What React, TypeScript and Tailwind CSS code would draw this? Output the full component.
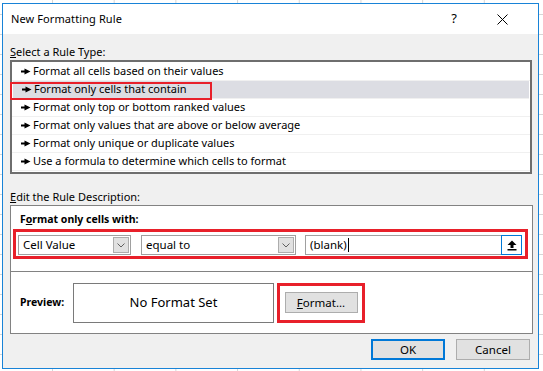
import React from 'react';

const RULE_TYPES = [
  'Format all cells based on their values',
  'Format only cells that contain',
  'Format only top or bottom ranked values',
  'Format only values that are above or below average',
  'Format only unique or duplicate values',
  'Use a formula to determine which cells to format',
];

const RuleArrow = () => (
  <svg width="10" height="7" viewBox="0 0 10 7" className="shrink-0">
    <rect x="0" y="2.5" width="5" height="2" fill="#000" />
    <path d="M3.5 0.5 L9.5 3.5 L3.5 6.5 Z" fill="#000" />
  </svg>
);

const Chevron = () => (
  <svg width="8" height="5" viewBox="0 0 8 5">
    <path d="M0.5 0.5 L4 4 L7.5 0.5" fill="none" stroke="#606060" strokeWidth="1" />
  </svg>
);

const Combo = ({ label, width }: { label: string; width: string }) => (
  <div className={`${width} h-[20px] bg-white border border-[#a0a0a0] flex items-center justify-between`}>
    <span className="pl-[4px] text-[11.5px] leading-none">{label}</span>
    <div className="w-[16px] h-[16px] mr-[1px] bg-[#e1e1e1] border border-[#adadad] flex items-center justify-center">
      <Chevron />
    </div>
  </div>
);

export default function App() {
  return (
    <div className="w-[543px] h-[371px] bg-white bg-[linear-gradient(to_right,#d6d6d6_1px,transparent_1px),linear-gradient(to_bottom,#d6d6d6_1px,transparent_1px)] bg-[size:61.7px_20px] bg-[position:52px_14px] pt-[3px] pl-[2px] pr-[4px] pb-[2px] font-['Noto_Sans',sans-serif] text-black">
      <div className="h-full border border-[#1883d7] bg-[#f0f0f0] flex flex-col">
        {/* title bar */}
        <div className="h-[30px] bg-white flex items-center pl-[8px] shrink-0">
          <span className="text-[11px] tracking-[0.1px]">New Formatting Rule</span>
          <span className="ml-auto text-[13px] mr-[40px]">?</span>
          <svg width="11" height="11" viewBox="0 0 11 11" className="mr-[30px]">
            <path d="M0.5 0.5 L10.5 10.5 M10.5 0.5 L0.5 10.5" stroke="#000" strokeWidth="1" />
          </svg>
        </div>

        <div className="pl-[7px] flex flex-col">
          <div className="pt-[9px] text-[11px] leading-[17px]">
            <span className="underline">S</span>elect a Rule Type:
          </div>

          {/* rule list */}
          <div className="relative w-[522px] h-[114px] border-2 border-[#6e6e6e] bg-white pt-[1px]">
            {RULE_TYPES.map((r, i) => (
              <div
                key={r}
                className={`h-[18px] flex items-center gap-[2px] pl-[9px] text-[11px] border-b border-[#f0f0f0] ${i === 1 ? 'bg-[#dcdde3] mx-[1px] pl-[8px]' : ''}`}
              >
                <RuleArrow />
                <span>{r}</span>
              </div>
            ))}
            <div className="absolute left-[-2px] top-[20px] w-[202px] h-[18px] border-2 border-[#e8202a]" />
          </div>

          <div className="mt-[14px] text-[11px] leading-[17px]">
            <span className="underline">E</span>dit the Rule Description:
          </div>

          {/* rule description */}
          <div className="w-[523px] h-[129px] border border-[#828282] bg-white flex flex-col">
            <div className="h-[66px] border-b border-[#828282] flex flex-col">
              <div className="pt-[5px] pl-[9px] text-[10.5px] leading-[17px] font-bold">
                F<span className="underline">o</span>rmat only cells with:
              </div>
              <div className="ml-[2px] mt-[1px] w-[515px] h-[30px] border-[3px] border-[#e8202a] flex items-start pt-[3px] pl-[2px]">
                <Combo label="Cell Value" width="w-[113px]" />
                <div className="ml-[10px]">
                  <Combo label="equal to" width="w-[155px]" />
                </div>
                <div className="ml-[9px] w-[217px] h-[20px] bg-white border border-[#a0a0a0] flex items-center">
                  <span className="pl-[4px] text-[11.5px] leading-none">(blank)</span>
                  <span className="w-px h-[14px] bg-black ml-[1px]" />
                  <div className="ml-auto w-[21px] h-[20px] -mr-px border border-[#0078d7] bg-white flex items-center justify-center">
                    <svg width="10" height="11" viewBox="0 0 10 11">
                      <path d="M5 0.5 L9.5 5 L6.5 5 L6.5 8 L3.5 8 L3.5 5 L0.5 5 Z" fill="#000" />
                      <rect x="0.5" y="9" width="9" height="1.5" fill="#000" />
                    </svg>
                  </div>
                </div>
              </div>
            </div>

            <div className="flex-1 flex items-center">
              <span className="pl-[9px] w-[62px] text-[10.5px] font-bold">Preview:</span>
              <div className="w-[201px] h-[40px] border border-[#7a7a7a] flex items-center justify-center text-[13px]">
                No Format Set
              </div>
              <div className="ml-[3px] w-[88px] h-[40px] border-[3px] border-[#e8202a] flex items-center justify-center">
                <div className="w-[73px] h-[21px] bg-[#e1e1e1] border border-[#adadad] flex items-center justify-center text-[11.5px]">
                  <span className="underline">F</span>ormat...
                </div>
              </div>
            </div>
          </div>

          {/* footer */}
          <div className="flex justify-end gap-[11px] mt-[5px] pr-[8px]">
            <div className="w-[74px] h-[21px] bg-[#e1e1e1] border-2 border-[#0078d7] flex items-center justify-center text-[11.5px]">
              OK
            </div>
            <div className="w-[74px] h-[21px] bg-[#e1e1e1] border border-[#adadad] flex items-center justify-center text-[11.5px]">
              Cancel
            </div>
          </div>
        </div>
      </div>
    </div>
  );
}
